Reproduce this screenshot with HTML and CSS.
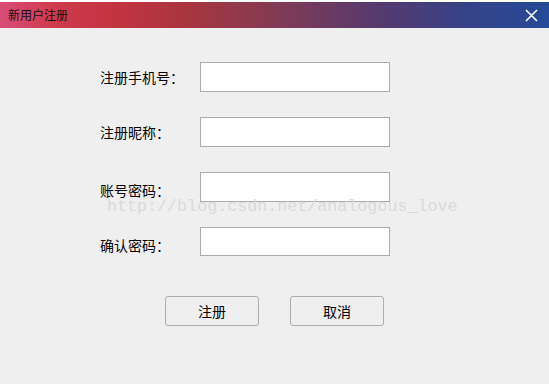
FILE: index.html
```html
<!DOCTYPE html>
<html lang="zh">
<head>
<meta charset="utf-8">
<title>新用户注册</title>
<link rel="stylesheet" href="styles.css">
</head>
<body>
<div class="window">
  <div class="titlebar">
    <span class="title">新用户注册</span>
    <span class="close" aria-label="关闭">
      <svg width="13" height="13" viewBox="0 0 13 13"><path d="M1 1 L12 12 M12 1 L1 12" stroke="#fff" stroke-width="1.6" fill="none"/></svg>
    </span>
  </div>
  <div class="content">
    <div class="form">
      <label class="label">注册手机号：</label><input class="field" type="text">
      <label class="label">注册昵称：</label><input class="field" type="text">
      <label class="label low">账号密码：</label><input class="field" type="password">
      <label class="label low">确认密码：</label><input class="field" type="password">
    </div>
    <div class="buttons">
      <button class="btn">注册</button>
      <button class="btn">取消</button>
    </div>
    <div class="watermark">http://blog.csdn.net/analogous_love</div>
  </div>
</div>
</body>
</html>
```
FILE: styles.css
```css
html, body {
  margin: 0;
  padding: 0;
  background: #ffffff;
}
body {
  font-family: "Noto Sans CJK SC", "Noto Sans", sans-serif;
  color: #000;
}
.window {
  width: 549px;
  height: 382px;
  margin-top: 2px;
  background: #efefef;
  display: flex;
  flex-direction: column;
}
.titlebar {
  height: 26px;
  flex: none;
  display: flex;
  align-items: center;
  justify-content: space-between;
  padding: 0 11px 0 8px;
  background: linear-gradient(to right, #d84c78 0%, #cf3a4c 10%, #c1333f 22%, #a6353f 35%, #883a52 48%, #6a3a62 60%, #4f3a72 72%, #34438a 86%, #244a98 100%);
}
.title {
  font-size: 12px;
  line-height: 14px;
  color: #111;
}
.close {
  display: flex;
  width: 13px;
  height: 13px;
}
.content {
  position: relative;
  flex: 1;
}
.form {
  display: grid;
  grid-template-columns: 100px 190px;
  row-gap: 25px;
  padding: 34px 0 0 100px;
  align-items: center;
}
.label {
  font-size: 14px;
  line-height: 16px;
}
.label.low {
  position: relative;
  top: 3px;
}
.field {
  box-sizing: border-box;
  width: 190px;
  height: 30px;
  margin: 0;
  border: 1px solid #ababab;
  background: #fff;
  outline: none;
  padding: 0 4px;
}
.form .field:nth-of-type(4) {
  height: 29px;
}
.buttons {
  display: flex;
  gap: 31px;
  padding: 40px 0 0 165px;
}
.btn {
  box-sizing: border-box;
  width: 94px;
  height: 30px;
  margin: 0;
  border: 1px solid #adadad;
  border-radius: 3px;
  background: #efefef;
  font-family: "Noto Sans CJK SC", sans-serif;
  font-size: 14px;
  color: #000;
  padding: 0;
}
.watermark {
  position: absolute;
  left: 107px;
  top: 171px;
  font-family: "Liberation Mono", monospace;
  font-size: 16.7px;
  line-height: 15px;
  color: #dadada;
  white-space: nowrap;
  pointer-events: none;
}
```
